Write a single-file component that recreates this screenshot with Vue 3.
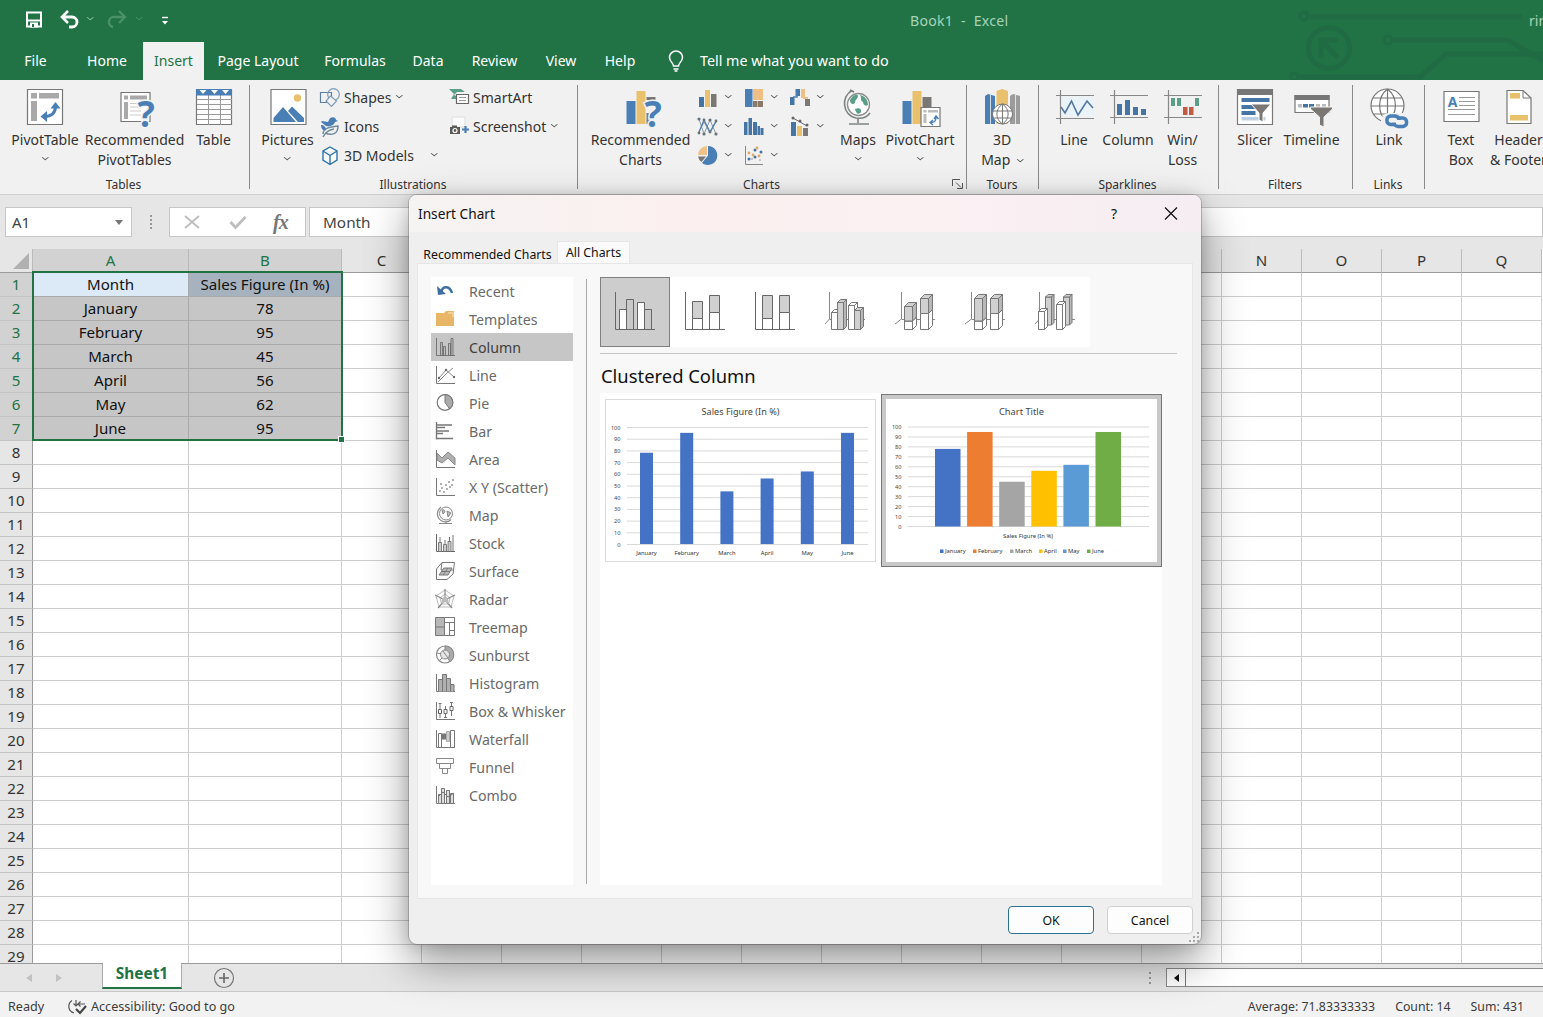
<template>
  <div class="excel">
    <header class="title-bar">
      <svg class="circuit" width="253" height="80" viewBox="1290 0 253 80">
        <g fill="none" stroke="#206b43" stroke-width="5">
          <path d="M1310 17H1522M1394 40H1508L1543 61M1300 77H1420L1446 54H1543" />
          <circle cx="1329" cy="48" r="20.5" />
          <circle cx="1388" cy="40" r="4" stroke-width="3" />
          <circle cx="1304" cy="16" r="4" stroke-width="3" />
          <circle cx="1294" cy="77" r="4" stroke-width="3" />
          <path d="M1338 58L1323 42M1321 58V40H1338" />
        </g>
      </svg>
      <div class="quick-access">
        <Glyph :shapes="icons.save" :width="18" :height="18" class="qa-save" />
        <Glyph :shapes="icons.undo" :width="20" :height="18" class="qa-undo" />
        <i class="chev pale"></i>
        <Glyph :shapes="icons.redo" :width="20" :height="18" class="qa-redo" />
        <i class="chev dim"></i>
        <Glyph :shapes="icons.customize" :width="8" :height="10" class="qa-custom" />
      </div>
      <div class="doc-title">Book1&nbsp; -&nbsp; Excel</div>
      <div class="user-name">rin</div>
    </header>

    <nav class="menu">
      <span v-for="m in menus" :key="m" class="menu-item" :class="['m-' + m.split(' ')[0].toLowerCase(), { active: m === 'Insert' }]">{{ m }}</span>
      <Glyph :shapes="icons.bulb" :width="16" :height="22" class="bulb" />
      <span class="tell-me">Tell me what you want to do</span>
    </nav>

    <section class="ribbon">
      <div v-for="g in groups" :key="g.name" class="group" :class="'g-' + g.name.toLowerCase()">
        <div class="group-body">
          <template v-for="(b, i) in g.items" :key="i">
            <div v-if="b.rows" class="small-list" :class="b.cls">
              <div v-for="r in b.rows" :key="r.label" class="small-btn">
                <Glyph :shapes="icons[r.icon]" :width="20" :height="20" />
                <span>{{ r.label }}</span>
                <i v-if="r.drop" class="chev"></i>
              </div>
            </div>
            <div v-else-if="b.minis" class="mini-grid">
              <div v-for="m in b.minis" :key="m" class="mini">
                <Glyph :shapes="icons[m]" :width="20" :height="20" />
                <i class="chev"></i>
              </div>
            </div>
            <div v-else class="big-btn" :class="b.cls">
              <Glyph :shapes="icons[b.icon]" :width="40" :height="40" />
              <span>{{ b.label }}</span>
              <span v-if="b.label2">{{ b.label2 }}<i v-if="b.inlineDrop" class="chev"></i></span>
              <i v-if="b.drop" class="chev below"></i>
            </div>
          </template>
        </div>
        <div class="group-name">{{ g.title }}</div>
        <Glyph v-if="g.launcher" :shapes="icons.launcher" :width="11" :height="11" class="launcher" />
      </div>
    </section>

    <section class="formula-bar">
      <div class="name-box">A1<i class="tri-down"></i></div>
      <div class="dots"><b></b><b></b><b></b><b></b></div>
      <div class="fx-box">
        <Glyph :shapes="icons.cancel" :width="18" :height="16" />
        <Glyph :shapes="icons.enter" :width="20" :height="16" />
        <em>fx</em>
      </div>
      <div class="formula">Month</div>
    </section>

    <main class="sheet">
      <div class="row head">
        <div class="corner"><i></i></div>
        <div v-for="(c, i) in columns" :key="c" class="col-head" :class="{ sel: i < 2 }">{{ c }}</div>
      </div>
      <div v-for="r in 29" :key="r" class="row">
        <div class="row-head" :class="{ sel: r <= 7 }">{{ r }}</div>
        <div v-for="(c, i) in columns" :key="c" class="cell" :class="cellClass(r, i)">{{ cellText(r, i) }}</div>
      </div>
      <div class="selection"><i></i></div>
    </main>

    <section class="sheet-tabs">
      <i class="arrow left"></i>
      <i class="arrow right"></i>
      <div class="sheet-tab">Sheet1</div>
      <Glyph :shapes="icons.addSheet" :width="22" :height="22" class="add-sheet" />
      <div class="dots grip"><b></b><b></b><b></b></div>
      <div class="scroll"><div class="scroll-btn"><i></i></div></div>
    </section>

    <footer class="status">
      <span class="ready">Ready</span>
      <Glyph :shapes="icons.access" :width="20" :height="18" />
      <span class="access-text">Accessibility: Good to go</span>
      <span class="stat avg">Average: 71.83333333</span>
      <span class="stat cnt">Count: 14</span>
      <span class="stat sum">Sum: 431</span>
    </footer>

    <div class="dialog">
      <div class="dialog-title">
        <span>Insert Chart</span>
        <span class="help">?</span>
        <Glyph :shapes="icons.close" :width="14" :height="14" />
      </div>
      <div class="dialog-tabs">
        <div class="tab">Recommended Charts</div>
        <div class="tab current">All Charts</div>
      </div>
      <div class="dialog-panel">
        <ul class="type-list">
          <li v-for="t in chartTypes" :key="t" :class="{ picked: t === 'Column' }">
            <Glyph :shapes="typeIcons[t]" :width="20" :height="20" />
            <span>{{ t }}</span>
          </li>
        </ul>
        <div class="divider"></div>
        <div class="chart-side">
          <div class="subtypes">
            <div v-for="(s, i) in subtypes" :key="i" class="subtype" :class="{ picked: i === 0 }">
              <Glyph :shapes="s" :width="41" :height="40" />
            </div>
          </div>
          <div class="rule"></div>
          <h2>Clustered Column</h2>
          <div class="previews">
            <svg class="preview plain" width="271" height="163">
              <text class="chart-title" x="135.5" y="16" textLength="78" lengthAdjust="spacingAndGlyphs">Sales Figure (In %)</text>
              <g v-for="n in 11" :key="n">
                <line x1="22" x2="263" :y1="gridA(n)" :y2="gridA(n)" class="grid-line" />
                <text class="axis" x="15.5" :y="gridA(n) + 2">{{ (n - 1) * 10 }}</text>
              </g>
              <g v-for="(d, i) in sales" :key="d.month">
                <rect :x="35 + i * 40.2" :y="145 - d.value * 1.17" width="13" :height="d.value * 1.17" fill="#4472c4" />
                <text class="cat" :x="41.5 + i * 40.2" y="156">{{ d.month }}</text>
              </g>
            </svg>
            <div class="preview framed">
              <svg width="271" height="163">
                <text class="chart-title" x="135.5" y="16" textLength="45" lengthAdjust="spacingAndGlyphs">Chart Title</text>
                <g v-for="n in 11" :key="n">
                  <line x1="22" x2="263" :y1="gridB(n)" :y2="gridB(n)" class="grid-line" />
                  <text class="axis" x="15.5" :y="gridB(n) + 2">{{ (n - 1) * 10 }}</text>
                </g>
                <g v-for="(d, i) in sales" :key="d.month">
                  <rect :x="49 + i * 32.1" :y="127.5 - d.value * 0.995" width="25.5" :height="d.value * 0.995" :fill="d.color" />
                  <rect :x="d.legend" y="150.5" width="3.5" height="3.5" :fill="d.color" />
                  <text class="cat start" :x="d.legend + 5" y="154">{{ d.month }}</text>
                </g>
                <text class="cat" x="142" y="139" textLength="50" lengthAdjust="spacingAndGlyphs">Sales Figure (In %)</text>
              </svg>
            </div>
          </div>
        </div>
      </div>
      <div class="dialog-footer">
        <button class="ok">OK</button>
        <button>Cancel</button>
      </div>
      <Glyph :shapes="icons.resize" :width="12" :height="12" class="resize" />
    </div>
  </div>
</template>

<script setup>
import { h } from 'vue'

// 形状: [路径, 填充, 描边, 线宽],或 { t, x, y, size, fill } 表示文字
const Glyph = (props) =>
  h(
    'svg',
    { width: props.width, height: props.height, viewBox: `0 0 ${props.width} ${props.height}`, style: { overflow: 'visible' } },
    props.shapes.map((s) =>
      Array.isArray(s)
        ? h('path', { d: s[0], fill: s[1] || 'none', stroke: s[2] || 'none', 'stroke-width': s[3] || 1 })
        : h('text', {
            x: s.x, y: s.y, fill: s.fill, 'font-size': s.size, 'font-weight': 700, 'text-anchor': 'middle',
            stroke: s.halo || 'none', 'stroke-width': s.halo ? 3 : 0, 'paint-order': 'stroke'
          }, s.t)
    )
  )
Glyph.props = ['shapes', 'width', 'height']

const BLUE = '#4a7fb5'
const GOLD = '#e9c06c'
const GRAY = '#7b7774'
const TEAL = '#5c9f88'
const DARK = '#6a6a6a'

const box = (x, y, w, hh) => `M${x} ${y}h${w}v${hh}h${-w}z`
const disc = (x, y, r) => `M${x - r} ${y}a${r} ${r} 0 1 0 ${2 * r} 0a${r} ${r} 0 1 0 ${-2 * r} 0z`
const dots = (r, ...pts) => pts.map(([x, y]) => disc(x, y, r)).join('')

const icons = {
  save: [[box(2, 1.5, 14, 14), 'none', '#fff', 2], [box(3, 8.5, 12, 2), '#fff'], [box(5, 11.5, 8, 5), '#fff'], [box(7, 13, 2, 3), '#217346']],
  undo: [['M3 6H12A5 5 0 0 1 12 16H9', 'none', '#fff', 2.8], ['M8 0L2 6L8 12', 'none', '#fff', 2.6]],
  redo: [['M17 6H8A5 5 0 0 0 6 16', 'none', '#4a9069', 2.4], ['M12 0L18 6L12 12', 'none', '#4a9069', 2.4]],
  customize: [['M1 1.5H7', 'none', '#fff', 1.4], ['M1 5H7L4 8.5z', '#fff']],
  bulb: [['M5.5 16C5.5 13 1.5 11.5 1.5 7.5A6.5 6.5 0 0 1 14.5 7.5C14.5 11.5 10.5 13 10.5 16zM5.5 19H10.5M6.5 21H9.5', 'none', '#fff', 1.5]],
  launcher: [['M.5 7V.5H8M10.500 4V9.500H5M4 3.500L9 8.500', 'none', '#555']],
  cancel: [['M2 2L16 14M16 2L2 14', 'none', '#bdbdbd', 1.8]],
  enter: [['M2.500 8L7.500 13.500L17.500 3', 'none', '#bdbdbd', 2.8]],
  addSheet: [[disc(11, 11, 9.5), 'none', '#777', 1.2], ['M11 6V16M6 11H16', 'none', '#666', 1.6]],
  access: [['M4 3.500C-1 7 0 14 6 16M8 3V9M5.500 6.500L8 9L10.500 6.500M10 7H17M12.500 4.500L10 7L12.500 9.500', 'none', '#555', 1.2], ['M8 12L12 16L18 9', 'none', '#444', 2.2]],
  close: [['M1 .5L13 12.5M13 .5L1 12.5', 'none', '#111', 1.2]],
  resize: [[box(8, 0, 2, 2) + box(4, 4, 2, 2) + box(8, 4, 2, 2) + box(0, 8, 2, 2) + box(4, 8, 2, 2) + box(8, 8, 2, 2), '#aaa']],

  pivot: [
    [box(2.5, 2.5, 35, 35), '#fff', '#777', 1.2],
    [box(6, 6, 6, 5.5) + box(14, 6, 20, 5.5) + box(6, 14, 6, 20), '#a9a9a9'],
    ['M19 29.5C27 29.5 30.5 26 30.5 19', 'none', BLUE, 3],
    ['M25.5 21.5L30.5 15L35.5 21.5zM22 24L15.5 29.5L22 35z', BLUE]
  ],
  recPivot: [
    [box(6, 5.5, 29, 29), '#fff', '#777', 1.2],
    [box(9, 8.5, 4, 4) + box(15, 8.5, 17, 4) + box(9, 15, 4, 17), '#a9a9a9'],
    ['M15 16.5H24M15 20H24M15 24H26M15 28H26', 'none', '#ccc'],
    { t: '?', x: 31, y: 40, size: 36, fill: BLUE, halo: '#f1f1f1' }
  ],
  table: [
    [box(2.5, 2.5, 35, 35), '#fff', '#777', 1.2],
    ['M14.5 8V38M26.5 8V38M3 12.500H38M3 17.500H38M3 22.500H38M3 27.500H38M3 32.500H38', 'none', '#999'],
    [box(2, 2, 36, 6.5), BLUE],
    ['M5.5 3H12.5L9 7zM17 3H24L20.5 7zM28 3H35L31.5 7z', '#fff']
  ],
  pictures: [
    [box(3, 2.5, 35, 35), '#fff', '#777', 1.2],
    [disc(29.5, 11, 3.7), GOLD],
    ['M5.5 35V31L15 20L28 35zM20 24L24 19.5L36 31V35H30z', BLUE]
  ],
  shapes: [[box(.5, 4.5, 11, 10), '#f1f1f1', '#5f7f9f', 1.2], [disc(13.5, 6.5, 5.8), 'none', '#7f9bb8', 1.2], ['M10.5 8L16.5 13L11.5 18.5L6 13z', '#f1f1f1', '#7f9bb8', 1.2]],
  iconsIcon: [
    ['M10 1C14-1 16 1 16 3L18 4L15 5C14 9 8 10 6 9L1 5L2 4L8 5z', BLUE],
    ['M3 17C3 11 10 10 18 9C18 17 12 19 5 16M3 20C6 14 10 13 14 12', 'none', '#708c9c', 1.5],
    ['M1 8C4 8 6 10 6 13C3 14 1 12 1 8z', BLUE]
  ],
  models: [['M10 1L17 5V14L10 18.5L3 14V5zM3 5L10 9.5L17 5M10 9.5V18', '#f8fbff', '#2f74a8', 1.4]],
  smartArt: [['M0 1H12L16 4H8L5 7L9 9V11H2L5 6z', TEAL], [box(7.5, 6.5, 12, 9), '#fff', '#666', 1.2], ['M10 9.5H17M10 12.5H17', 'none', '#999']],
  screenshot: [[box(3, 0, 13, 10), '#fbfbfb', '#ddd'], [box(1, 10, 10, 7) + box(3, 8.5, 5, 2), '#5d5b58'], [disc(6, 13.5, 2), 'none', '#fff', 1.2], ['M16.5 9V16M13 12.5H20', 'none', BLUE, 2.2]],

  recCharts: [
    [box(5.5, 14, 9, 23), BLUE], [box(15.5, 4, 9, 33), GOLD], [box(25.5, 10, 9, 3), GRAY], [box(25.5, 26, 5, 11), GRAY],
    { t: '?', x: 32, y: 40, size: 36, fill: BLUE, halo: '#f1f1f1' }
  ],
  miniColumn: [[box(1, 9, 5, 10), '#4475a5'], [box(7, 2, 5, 17), GOLD], [box(13, 6, 5.5, 13), GRAY]],
  miniTree: [[box(1, 1, 7.5, 18), BLUE], [box(9, 1, 10, 11), '#efbf85'], [box(9, 13, 4, 6) + box(13.5, 13, 5.5, 6), '#8b7a68']],
  miniWater: [['M0 9H4.5V17H0zM5.500 1H10V8H5.500z', '#4475a5'], ['M3 9H7V1', 'none', BLUE, 1.5], [box(11, 1, 4, 9), '#efbf85'], [box(15, 11, 5, 7), GRAY], ['M13 10H18', 'none', '#efbf85', 2]],
  miniLine: [
    ['M1 2L6 17L12 3L18 17M1 15L6 5L12 16L18 5', 'none', '#8c98a3'],
    ['M1 15L6 3L12 15L18 4', 'none', BLUE, 1.2],
    [dots(1.6, [1, 2], [6, 17], [12, 3], [18, 17]), '#66727c'],
    [dots(1.4, [1, 16], [6, 3], [12, 15], [18, 4]), '#66727c']
  ],
  miniHist: [[box(0, 5, 3.5, 13) + box(4.5, 1, 3.5, 17) + box(9, 5, 4, 13) + box(13.5, 9, 2.5, 9) + box(16.5, 11, 3, 7), '#4475a5']],
  miniCombo: [[box(1, 5, 5, 14), '#4475a5'], [box(7, 9, 5, 10), GOLD], [box(13, 11, 5, 8), GRAY], ['M3 1L10 5L17 9', 'none', '#666'], [dots(1.5, [3, 1], [10, 4], [17, 8]), '#666']],
  miniPie: [['M10 9.5L10 0A9.5 9.500 0 1 1 4 17z', BLUE], ['M9 9V0A9 9 0 0 0 0 9z', '#efc28a'], ['M8 10.5H0A9 9 0 0 0 3.5 16z', GRAY]],
  miniScatter: [['M1.5 0V18.5H19', 'none', '#888'], [dots(1.5, [5, 13], [11, 11], [17, 6], [11, 4]), '#4475a5'], [dots(1.4, [5, 7], [9, 9], [15, 10], [13, 2]), '#e0a860'], [dots(1.1, [16, 14], [8, 13]), '#bbb']],

  maps: [
    [disc(20.5, 17.5, 11), '#fff', '#8a8f8d', 1.3],
    ['M12 13C15 7 20 7 20 9C20 12 17 12 17 16C15 18 12 17 12 13zM22 8C27 9 30 13 30 18C27 20 25 17 25 15C22 14 24 11 22 8zM17 22C21 20 24 22 23 25C21 28 18 27 17 22z', TEAL],
    ['M14 3.5C3 9 4 28 18 31C24 32 29 30 32 26M20 31V36M11 37H31', 'none', '#7d8582', 1.6], ['M12 3L16 5', 'none', '#777', 1.6]
  ],
  pivotChart: [
    [box(2.5, 14, 9, 23), BLUE], [box(12.5, 4, 9, 33), GOLD], [box(22.5, 10, 9, 10), GRAY],
    [box(21, 20.5, 19, 19), '#fff', '#777', 1.2],
    [box(23.5, 23, 3, 2.5) + box(28, 23, 10, 2.5) + box(23.5, 27, 3, 9), '#bbb'],
    ['M31 35.5C35 35.5 36 34 36 30M34 32L36 29L38.5 32M33 33L30 35.5L33 38', 'none', BLUE, 1.4]
  ],
  map3d: [
    ['M3 9L6 7L13 9V37H3z', BLUE], ['M14.5 4L20 2L26 4V37H14.5z', GOLD], ['M28 9L31 7L38 9V37H28z', '#9c9c9c'],
    ['M8.500 8V37', 'none', '#f1f1f1', .8], ['M33.500 8V37', 'none', '#f1f1f1', .8],
    [disc(20.5, 27, 10), '#fff', '#777'],
    ['M20.5 17V37M11 24H30M11 31H30M20.5 17C13 22 13 32 20.5 37M20.5 17C28 22 28 32 20.5 37', 'none', '#777']
  ],
  sparkLine: [['M2 8.5H40M2 31.5H40M6.5 3V37', 'none', '#888', 1.2], [box(7.5, 10, 32, 19), '#eaf2fa'], ['M7 20L11 26L17.5 14L24 28L33 14L39 21', 'none', '#54799f', 1.6]],
  sparkCol: [['M2 8.5H40M2 30.5H40M6.5 3V37', 'none', '#888', 1.2], [box(9, 17, 5, 11) + box(17, 13, 5, 15) + box(25, 20, 5, 8) + box(33, 22, 5, 6), '#4475a5']],
  sparkWin: [['M1 8.5H39M1 30.5H39M5.5 3V37', 'none', '#888', 1.2], [box(8, 11, 4, 8) + box(14, 11, 4, 8) + box(32, 11, 4, 8), TEAL], [box(20, 20, 4.5, 8) + box(26, 20, 4.5, 8), '#c25b43']],
  slicer: [
    [box(2.5, 2.5, 35, 35), '#fff', '#777', 1.2], [box(2, 2, 36, 6), '#777'],
    [box(6.5, 11, 28, 4) + box(6.5, 18, 14, 4) + box(6.5, 24, 14, 4), '#4475a5'], [box(6.5, 30, 24, 3.5), '#bdd0e4'],
    ['M16 17H36L28 26V35L24 33V26z', GRAY, '#fff']
  ],
  timeline: [
    [box(3, 8.5, 34, 17), '#fff', '#777', 1.2], [box(2.5, 8, 35, 5), '#777'],
    [box(6, 17, 4, 3.5) + box(24, 17, 4, 3.5) + box(30, 17, 4, 3.5), '#bbb'], [box(11, 17, 5, 3.5) + box(17, 17, 5, 3.5), '#4475a5'],
    ['M18.5 20H40.5V22L32 30V40L27.5 38V30L18.5 22z', GRAY, '#f1f1f1']
  ],
  link: [
    [disc(18.5, 18.5, 16.5), '#fff', '#777', 1.2],
    ['M18.5 2V35M4 11H33M2 19H35M4 27H33M18.5 2C8 10 8 27 18.5 35M18.5 2C29 10 29 27 18.5 35', 'none', '#777', 1.2],
    ['M20 26H36V42H20A8 8 0 0 1 20 26z', '#f1f1f1'],
    ['M27 37.5H21.5A4.3 4.3 0 0 1 21.5 29H26A4.3 4.3 0 0 1 30 33M28 31H34A4.3 4.3 0 0 1 34 39.5H29A4.3 4.3 0 0 1 25 35.5', 'none', BLUE, 3.4]
  ],
  textBox: [
    [box(3, 4.5, 35, 30), '#fff', '#777', 1.2],
    ['M18 10.5H34M18 14.5H34M18 18.5H34M7 22.5H34M7 27.5H34', 'none', '#999'],
    { t: 'A', x: 11.5, y: 20, size: 14, fill: BLUE }
  ],
  header: [['M8 3.5H24L32 11V36.5H8z', '#fff', '#777', 1.2], ['M24 3.5V11H32', 'none', '#777'], [box(11, 6, 10, 5.5) + box(11, 28, 18, 5.5), GOLD]]
}

const axis = ['M1.5 1V18.5H20', 'none', '#777']
const typeIcons = {
  Recent: [['M6 11C8 4 15 5 17 12', 'none', '#3f6f9f', 2.4], ['M2 5L3 14L11 13z', '#3f6f9f']],
  Templates: [['M1 4H9L11 2H19V17H1z', '#e9b566'], ['M13 4H18V8', 'none', '#f5d69e', 1.5]],
  Column: [axis, [box(5.5, 5.5, 2, 13) + box(8.5, 9.5, 2, 9) + box(13.5, 6.5, 2, 12) + box(16, 1.5, 2, 17), '#bbb', '#666', .8]],
  Line: [axis, ['M4 13L11 5L19 12M3 17L12 8L18 3', 'none', '#888'], [dots(1.2, [4, 13], [11, 5], [19, 12]), DARK]],
  Pie: [[disc(10, 9.5, 7.8), '#fff', '#777', 1.2], ['M10 9.5V1.7A7.8 7.8 0 0 1 14.5 15.8z', '#aaa', '#777']],
  Bar: [['M1.5 1V18.5', 'none', '#777', 1.4], ['M2 4H17M2 6.5H10M2 10H14M2 12.5H8M2 17.5H18', 'none', '#777', 1.5]],
  Area: [['M2 11V4L7 9L13 3L20 9V16L13 9L7 14z', '#b0b0b0', '#888'], axis],
  'X Y (Scatter)': [axis, [dots(1, [5, 14], [7, 11], [9, 15], [12, 12], [11, 8], [15, 10], [14, 5], [17, 8], [18, 3], [6, 7]), '#999']],
  Map: [[disc(11, 8.5, 6.5), '#fff', '#888'], ['M7 5C10 4 11 7 8 9zM12 6L16 8L13 12z', '#bbb', '#888'], ['M6 2C1 6 1 14 8 16.5C11 17.5 14 16.5 16 14.5M11 16.5V18.500M4 18.5H17', 'none', '#888', 1.2]],
  Stock: [['M1.5 1V18.5H20', 'none', '#666'], ['M5 4V18M10 7V18M14.5 4V18M18 2V18', 'none', '#777'], [box(3.5, 9.5, 3, 9) + box(8.5, 11.5, 3, 7) + box(13, 8.5, 3, 10), '#ccc', '#666', .8]],
  Surface: [['M1.5 8L7 1.5H19.5L18 13L12 18.5H1.5zM7 1.5L6 9H18', '#fff', '#777'], ['M4 14L9 7H17L13 14zM6.5 10.5H15M8 14L13 7', '#bbb', '#777']],
  Radar: [['M10 1L19 7L16 18H4L1 7zM10 5L15 9L13.5 15H6.5L5 9z', 'none', '#bbb'], ['M10 0V11M10 11L20 6M10 11L3 19M10 11L17 19M10 11L0 6', 'none', '#888', 1.2], ['M10 6L13 10L14 15L10 13L6 15L7 10z', '#bbb']],
  Treemap: [[box(.5, .5, 9, 18), '#b8b8b8', '#777'], [box(9.5, .5, 10, 18), '#fff', '#777'], ['M.5 10H9.5M9.5 5.5H19.5M14.500 5.5V18.5M14.5 13.5H19.5', 'none', '#777']],
  Sunburst: [[disc(10, 9.5, 8.5), '#fff', '#888', 1.2], ['M10 1A8.5 8.5 0 0 1 15 16.5L12.5 13A4 4 0 0 0 10 6z', '#aaa', '#888'], [disc(10, 9.5, 4.5), '#e4e4e4', '#888'], ['M2 8L6 9M4 16L7 13M8 6L13 13', 'none', '#888']],
  Histogram: [axis, ['M3.5 18.500V6.5H7.5V18.5M7.5 18.5V1.5H11.5V18.5M11.5 18.500V5.5H15.5V18.5M15.5 18.5V11.5H19V18.5', '#b0b0b0', '#777']],
  'Box & Whisker': [axis, ['M5 3V17M10.5 5V16M16.500 1V15M3.5 2.500H6.5M9 16.500H12M15 1.5H18', 'none', '#777'], [box(3.5, 8.5, 3, 4) + box(9, 8.5, 3, 4) + box(15, 5.5, 3, 4), '#fff', '#666']],
  Waterfall: [axis, [box(3.5, 4.500, 3, 14), '#fff', '#777'], [box(7, 4.5, 4, 6), '#777'], [box(11.500, 2.5, 3, 10), '#ccc', '#aaa'], [box(15.5, 1.5, 4, 17), '#fff', '#777']],
  Funnel: [[box(1.5, 1.5, 17, 5) + box(4.5, 6.5, 11, 5) + box(7.5, 11.5, 5, 5), '#fff', '#888']],
  Combo: [axis, [box(3.5, 9.5, 3, 9) + box(6.5, 3.5, 3, 15) + box(11.5, 5.5, 3, 13) + box(15.5, 8.5, 3, 10), '#ddd', '#777'], ['M3 12L8 7L13 12L19 8', 'none', '#777']]
}
const chartTypes = Object.keys(typeIcons)

// 立体柱: 正面 + 顶面 + 侧面
const bar3d = (x, y, w, hh, d, fill) => [
  [box(x, y, w, hh), fill, '#777'],
  [`M${x} ${y}l${d} ${-d}h${w}l${-d} ${d}z`, fill, '#777'],
  [`M${x + w} ${y}l${d} ${-d}v${hh}l${-d} ${d}z`, fill === '#fff' ? '#fff' : '#b8b8b8', '#777']
]
const base = ['M.5 0V37.5H40', 'none', '#666']
const bars = (fill, ...list) => [list.map((b) => box(...b)).join(''), fill, '#666']
const base3d = (x) => [`M${x} 0V27L0 32M${x} 27.5H40`, 'none', '#888']
const subtypes = [
  [bars('#fff', [4.5, 17.5, 7, 20], [22.5, 10.5, 7, 27]), bars('#c9c9c9', [11.5, 7.5, 7, 30], [29.5, 17.5, 7, 20]), base],
  [bars('#d0d0d0', [7.5, 9.5, 10, 17], [24.5, 3.5, 10, 17]), bars('#fff', [7.5, 26.5, 10, 11], [24.5, 20.5, 10, 17]), base],
  [bars('#d0d0d0', [7.5, 3.5, 10, 23], [24.5, 3.5, 10, 17]), bars('#fff', [7.5, 26.5, 10, 11], [24.5, 20.5, 10, 17]), base],
  [base3d(4.5), ...bar3d(6.5, 20.5, 6, 17, 3, '#fff'), ...bar3d(12.5, 10.5, 6, 27, 3, '#d0d0d0'), ...bar3d(23.5, 13.5, 6, 24, 3, '#fff'), ...bar3d(29.5, 18.5, 6, 19, 3, '#d0d0d0')],
  [base3d(6.5), ...bar3d(9.5, 29, 8, 8.5, 4, '#fff'), ...bar3d(9.5, 14.5, 8, 14.5, 4, '#d0d0d0'), ...bar3d(25.5, 21.5, 8, 16, 4, '#fff'), ...bar3d(25.5, 6.5, 8, 15, 4, '#d0d0d0')],
  [base3d(6.5), ...bar3d(9.5, 29, 8, 8.5, 4, '#fff'), ...bar3d(9.5, 6.5, 8, 22.5, 4, '#d0d0d0'), ...bar3d(25.5, 21.5, 8, 16, 4, '#fff'), ...bar3d(25.5, 6.5, 8, 15, 4, '#d0d0d0')],
  [base3d(4.5), ...bar3d(10.5, 5, 6, 28, 2.5, '#d0d0d0'), ...bar3d(3.5, 19.5, 6, 18, 3, '#fff'), ...bar3d(28.5, 5, 6, 28, 2.5, '#d0d0d0'), ...bar3d(21.5, 12.5, 6, 25, 3, '#fff')]
]

const menus = ['File', 'Home', 'Insert', 'Page Layout', 'Formulas', 'Data', 'Review', 'View', 'Help']

const groups = [
  {
    name: 'Tables', title: 'Tables', items: [
      { label: 'PivotTable', icon: 'pivot', drop: true, cls: 'w78' },
      { label: 'Recommended', label2: 'PivotTables', icon: 'recPivot', cls: 'w101' },
      { label: 'Table', icon: 'table', cls: 'w57' }
    ]
  },
  {
    name: 'Illus', title: 'Illustrations', items: [
      { label: 'Pictures', icon: 'pictures', drop: true, cls: 'w59' },
      { cls: 'first', rows: [{ label: 'Shapes', icon: 'shapes', drop: true }, { label: 'Icons', icon: 'iconsIcon' }, { label: '3D Models', icon: 'models', drop: true }] },
      { cls: 'second', rows: [{ label: 'SmartArt', icon: 'smartArt' }, { label: 'Screenshot', icon: 'screenshot', drop: true }] }
    ]
  },
  {
    name: 'Charts', title: 'Charts', launcher: true, items: [
      { label: 'Recommended', label2: 'Charts', icon: 'recCharts', cls: 'w101' },
      { minis: ['miniColumn', 'miniTree', 'miniWater', 'miniLine', 'miniHist', 'miniCombo', 'miniPie', 'miniScatter'] },
      { label: 'Maps', icon: 'maps', drop: true, cls: 'w52' },
      { label: 'PivotChart', icon: 'pivotChart', drop: true, cls: 'w72' }
    ]
  },
  { name: 'Tours', title: 'Tours', items: [{ label: '3D', label2: 'Map', inlineDrop: true, icon: 'map3d', cls: 'w70' }] },
  {
    name: 'Spark', title: 'Sparklines', items: [
      { label: 'Line', icon: 'sparkLine', cls: 'w54' },
      { label: 'Column', icon: 'sparkCol', cls: 'w54' },
      { label: 'Win/', label2: 'Loss', icon: 'sparkWin', cls: 'w55' }
    ]
  },
  { name: 'Filters', title: 'Filters', items: [{ label: 'Slicer', icon: 'slicer', cls: 'w52' }, { label: 'Timeline', icon: 'timeline', cls: 'w61' }] },
  { name: 'Links', title: 'Links', items: [{ label: 'Link', icon: 'link', cls: 'w72' }] },
  { name: 'Text', title: '', items: [{ label: 'Text', label2: 'Box', icon: 'textBox', cls: 'w52' }, { label: 'Header', label2: '& Footer', icon: 'header', cls: 'w63' }] }
]

const columns = 'ABCDEFGHIJKLMNOPQR'.split('')

const sales = [
  { month: 'January', value: 78, color: '#4472c4', legend: 54 },
  { month: 'February', value: 95, color: '#ed7d31', legend: 87 },
  { month: 'March', value: 45, color: '#a5a5a5', legend: 124 },
  { month: 'April', value: 56, color: '#ffc000', legend: 153 },
  { month: 'May', value: 62, color: '#5b9bd5', legend: 177 },
  { month: 'June', value: 95, color: '#70ad47', legend: 201 }
]

const gridA = (n) => 145.5 - (n - 1) * 11.7
const gridB = (n) => 127.5 - (n - 1) * 9.95

const cellText = (r, i) => {
  if (r > 7 || i > 1) return ''
  if (r === 1) return i ? 'Sales Figure (In %)' : 'Month'
  return i ? sales[r - 2].value : sales[r - 2].month
}

const cellClass = (r, i) => {
  if (r > 7 || i > 1) return ''
  if (r === 1) return i ? 'picked title-b' : 'picked title-a'
  return 'picked'
}
</script>

<style>
body {
  margin: 0;
  overflow: hidden;
}
</style>

<style scoped>
.excel {
  position: relative;
  width: 1543px;
  height: 1017px;
  overflow: hidden;
  background: #e6e6e6;
  font-family: "Noto Sans", "Open Sans", "Liberation Sans", sans-serif;
  font-size: 14px;
  color: #333;
  white-space: nowrap;
}

svg {
  display: block;
  flex: none;
}

.chev {
  display: inline-block;
  width: 3.5px;
  height: 3.5px;
  flex: none;
  border-right: 1.3px solid #555;
  border-bottom: 1.3px solid #555;
  transform: translateY(-2px) scaleY(0.8) rotate(45deg);
}

.chev.pale {
  border-color: #8fbfa4;
}

.chev.dim {
  border-color: #4a9069;
}

/* 标题栏 */
.title-bar {
  position: relative;
  height: 42px;
  background: #217346;
  display: flex;
  align-items: center;
}

.circuit {
  position: absolute;
  right: 0;
  top: 0;
  z-index: 1;
}

.quick-access {
  display: flex;
  align-items: center;
  width: 910px;
  flex: none;
  padding-left: 25px;
  box-sizing: border-box;
  margin-top: -3px;
}

.qa-undo {
  margin-left: 17px;
}

.quick-access .pale {
  margin-left: 8px;
}

.qa-redo {
  margin-left: 14px;
}

.quick-access .dim {
  margin-left: 10px;
}

.qa-custom {
  margin-left: 20px;
  margin-top: 3px;
}

.doc-title {
  color: #a7d3b9;
  width: 619px;
  flex: none;
  margin-top: -2px;
  font-size: 14.1px;
  letter-spacing: 0.27px;
}

.user-name {
  color: #a7d3b9;
  position: relative;
  z-index: 2;
  margin-top: -2px;
}

.menu {
  height: 38px;
  background: #217346;
  display: flex;
  align-items: center;
  color: #fff;
}

.menu-item {
  height: 38px;
  line-height: 37px;
  text-align: center;
}

.m-file {
  width: 71px;
}

.m-home {
  width: 72px;
}

.m-insert {
  width: 61px;
}

.m-page {
  width: 108px;
}

.m-formulas {
  width: 86px;
}

.m-data {
  width: 60px;
}

.m-review {
  width: 73px;
}

.m-view {
  width: 60px;
}

.m-help {
  width: 58px;
}

.menu-item.active {
  background: #f1f1f1;
  color: #217346;
}

.bulb {
  margin-left: 19px;
}

.tell-me {
  margin: -2px 0 0 16px;
  font-size: 14.3px;
}

/* 功能区 */
.ribbon {
  height: 114px;
  background: #f1f1f1;
  border-bottom: 1px solid #cfcfcf;
  display: flex;
  overflow: hidden;
}

.group {
  position: relative;
  flex: none;
  box-sizing: border-box;
  display: flex;
  flex-direction: column;
}

.group::after {
  content: "";
  position: absolute;
  right: 0;
  top: 5px;
  bottom: 5px;
  width: 1px;
  background: #8a8a8a;
}

.g-tables {
  width: 250px;
  padding-left: 6px;
}

.g-illus {
  width: 328px;
  padding-left: 8px;
}

.g-charts {
  width: 389px;
  padding-left: 12px;
}

.g-tours {
  width: 72px;
}

.g-spark {
  width: 180px;
  padding-left: 8px;
}

.g-filters {
  width: 134px;
  padding-left: 10px;
}

.g-links {
  width: 72px;
}

.g-text {
  width: 180px;
  padding-left: 10px;
}

.group-body {
  display: flex;
  height: 93px;
  flex: none;
}

.group-name {
  font-size: 12px;
  line-height: 23px;
  text-align: center;
}

.g-tables .group-name {
  padding-right: 9px;
}

.g-illus .group-name {
  padding-right: 10px;
}

.g-charts .group-name {
  padding-right: 34px;
}

.g-tours .group-name,
.g-links .group-name {
  padding-right: 2px;
}

.g-spark .group-name {
  padding-right: 11px;
}

.g-filters .group-name {
  padding-right: 12px;
}

.big-btn {
  flex: none;
  display: flex;
  flex-direction: column;
  align-items: center;
  padding-top: 7px;
}

.big-btn span {
  line-height: 20px;
}

.big-btn svg {
  margin-bottom: 3px;
}

.big-btn .below {
  margin-top: 7px;
}

.big-btn span .chev {
  margin-left: 8px;
  vertical-align: 2px;
}

.w52 {
  width: 52px;
}

.w54 {
  width: 54px;
}

.w55 {
  width: 55px;
}

.w57 {
  width: 57px;
}

.w59 {
  width: 59px;
}

.w61 {
  width: 61px;
}

.w63 {
  width: 63px;
}

.w70 {
  width: 70px;
}

.w72 {
  width: 72px;
}

.w78 {
  width: 78px;
}

.w101 {
  width: 101px;
}

.small-list {
  padding-top: 3px;
}

.small-list.first {
  width: 126px;
  padding-left: 3px;
}

.small-list.second {
  width: 120px;
  padding-left: 3px;
}

.small-btn {
  display: flex;
  align-items: center;
  height: 29px;
}

.small-btn span {
  margin-left: 4px;
}

.small-btn .chev {
  margin-left: 6px;
}

.first .small-btn:last-child .chev {
  margin-left: 18px;
}

.mini-grid {
  display: grid;
  grid-template-columns: repeat(3, 46px);
  grid-auto-rows: 29px;
  padding: 3px 0 0 7px;
  width: 134px;
}

.mini {
  display: flex;
  align-items: center;
}

.mini .chev {
  margin-left: 8px;
}

.launcher {
  position: absolute;
  right: 4px;
  bottom: 4px;
}

/* 编辑栏 */
.formula-bar {
  display: flex;
  align-items: flex-start;
  height: 54px;
  padding: 12px 0 0 5px;
  box-sizing: border-box;
  background: #e6e6e6;
}

.name-box,
.fx-box,
.formula {
  height: 30px;
  box-sizing: border-box;
  background: #fff;
  border: 1px solid #c6c6c6;
  line-height: 28px;
}

.name-box {
  width: 127px;
  padding: 0 8px 0 6px;
  display: flex;
  justify-content: space-between;
  align-items: center;
  font-size: 15px;
  color: #444;
}

.tri-down {
  border: 4px solid transparent;
  border-top: 5px solid #777;
  border-bottom: 0;
}

.dots {
  width: 37px;
  padding-top: 8px;
  display: flex;
  flex-direction: column;
  align-items: center;
  gap: 2px;
}

.dots b {
  width: 2px;
  height: 2px;
  background: #999;
}

.fx-box {
  width: 137px;
  display: flex;
  align-items: center;
  padding-left: 13px;
}

.fx-box svg + svg {
  margin-left: 27px;
}

.fx-box em {
  margin-left: 25px;
  font: italic bold 20px/26px "Liberation Serif", serif;
  letter-spacing: -1px;
  color: #777;
}

.formula {
  margin-left: 3px;
  flex: 1;
  padding-left: 13px;
  font-size: 15.3px;
  color: #444;
}

/* 表格 */
.sheet {
  position: relative;
  height: 714px;
  overflow: hidden;
  background: #fff;
  font-size: 15.1px;
}

.row {
  display: grid;
  grid-template-columns: 33px 156px 153px repeat(15, 80px);
  height: 24px;
  line-height: 22px;
  text-align: center;
}

.corner,
.row-head,
.col-head,
.cell {
  box-sizing: border-box;
  height: 24px;
  border-right: 1px solid #cdcdcd;
  border-bottom: 1px solid #cdcdcd;
}

.corner,
.row-head,
.col-head {
  background: #e6e6e6;
}

.row-head {
  border-right-color: #9b9b9b;
  border-bottom-color: #c3c3c3;
}

.col-head,
.corner {
  border-bottom-color: #9b9b9b;
  border-right-color: #bbb;
}

.corner {
  display: flex;
  justify-content: flex-end;
  align-items: flex-end;
}

.corner i {
  border-left: 16px solid transparent;
  border-bottom: 16px solid #b1b1b1;
  margin: 0 3px 3px 0;
}

.col-head.sel,
.row-head.sel {
  background: #d2d2d2;
  color: #217346;
}

.cell {
  color: #111;
}

.cell.picked {
  background: #c6c6c6;
  border-color: #aaa;
}

.cell.title-a {
  background: #dce9f7;
}

.cell.title-b {
  background: #a7b2bf;
}

.selection {
  position: absolute;
  left: 32px;
  top: 22px;
  width: 307px;
  height: 166px;
  border: 2px solid #217346;
}

.selection i {
  position: absolute;
  right: -4px;
  bottom: -4px;
  width: 5px;
  height: 5px;
  border: 1px solid #fff;
  background: #217346;
}

/* 工作表标签 */
.sheet-tabs {
  height: 29px;
  box-sizing: border-box;
  background: #e6e6e6;
  border-top: 1px solid #9b9b9b;
  border-bottom: 1px solid #c8c8c8;
  display: flex;
  align-items: center;
}

.arrow {
  border: 4px solid transparent;
}

.arrow.left {
  border-right: 6px solid #c2c2c2;
  border-left: 0;
  margin-left: 26px;
}

.arrow.right {
  border-left: 6px solid #c2c2c2;
  border-right: 0;
  margin-left: 24px;
}

.sheet-tab {
  width: 80px;
  height: 26px;
  margin: -3px 0 0 40px;
  border: 1px solid #aaa;
  border-top: 0;
  border-bottom: 2px solid #217346;
  background: #fff;
  box-sizing: border-box;
  text-align: center;
  line-height: 21px;
  font-weight: 700;
  font-size: 15.4px;
  color: #217346;
}

.add-sheet {
  margin-left: 31px;
}

.grip {
  margin-left: 906px;
  width: 18px;
  padding: 0;
  gap: 3px;
}

.scroll {
  margin-left: 7px;
  flex: 1;
  height: 17px;
  border: 1px solid #8a8a8a;
  border-right: 0;
  background: #fff;
}

.scroll-btn {
  width: 18px;
  height: 17px;
  border-right: 1.5px solid #777;
  display: flex;
  align-items: center;
  justify-content: center;
}

.scroll-btn i {
  border: 4px solid transparent;
  border-right: 5px solid #111;
  border-left: 0;
}

.status {
  height: 25px;
  background: #f2f2f2;
  display: flex;
  align-items: center;
  padding: 3px 19px 0 8px;
  box-sizing: border-box;
  font-size: 12.6px;
  color: #3c3c3c;
}

.ready {
  width: 60px;
}

.access-text {
  margin-left: 3px;
}

.stat {
  font-size: 12.3px;
}

.avg {
  margin-left: auto;
}

.cnt,
.sum {
  margin-left: 20px;
}

/* 插入图表对话框 */
.dialog {
  position: absolute;
  left: 409px;
  top: 195px;
  width: 792px;
  height: 749px;
  box-sizing: border-box;
  background: #efefef;
  border-radius: 8px;
  box-shadow: 0 0 0 1px rgba(120, 110, 110, 0.4), 0 18px 44px rgba(0, 0, 0, 0.42), 0 0 14px rgba(0, 0, 0, 0.14);
  color: #111;
}

.dialog-title {
  height: 37px;
  border-radius: 8px 8px 0 0;
  background: linear-gradient(90deg, #f6f3f3, #fbf0ef 35%, #fbf0f3 70%, #f5edf2);
  display: flex;
  align-items: center;
  padding: 0 23px 0 9px;
  font-size: 13.7px;
}

.help {
  margin-left: auto;
  margin-right: 47px;
  font-size: 14px;
}

.dialog-tabs {
  height: 31px;
  display: flex;
  align-items: flex-end;
  padding-left: 9px;
  font-size: 12.3px;
}

.tab {
  width: 139px;
  height: 19px;
  line-height: 21px;
  text-align: center;
}

.tab.current {
  width: 73px;
  height: 22px;
  line-height: 22px;
  background: #fafafa;
  border: 1px solid #e6e6e6;
  border-bottom: 0;
  box-sizing: border-box;
}

.dialog-panel {
  margin: 0 8px;
  height: 636px;
  box-sizing: border-box;
  background: #f8f8f8;
  border: 1px solid #e6e6e6;
  display: flex;
  padding: 13px 0 13px 13px;
}

.type-list {
  list-style: none;
  margin: 0;
  padding: 0;
  width: 142px;
  height: 608px;
  background: #fff;
  color: #6a6a6a;
  font-size: 14.2px;
}

.type-list li {
  height: 28px;
  display: flex;
  align-items: center;
  padding-left: 4px;
}

.type-list li span {
  margin-left: 14px;
}

.type-list .picked {
  background: #c6c6c6;
  color: #404040;
}

.divider {
  width: 1px;
  height: 605px;
  margin: 2px 13px 0;
  background: #a8a8a8;
}

.subtypes {
  width: 490px;
  height: 70px;
  display: flex;
  background: #fff;
}

.subtype {
  width: 70px;
  height: 70px;
  box-sizing: border-box;
  border: 1px solid transparent;
  padding: 14px 0 0 14px;
}

.subtype.picked {
  background: #cdcdcd;
  border-color: #808080;
}

.rule {
  width: 577px;
  height: 1px;
  margin-top: 6px;
  background: #c4c4c4;
}

.chart-side h2 {
  margin: 0 0 0 1px;
  height: 39px;
  line-height: 43px;
  font-size: 18.4px;
  font-weight: 400;
}

.previews {
  width: 562px;
  height: 492px;
  background: #fff;
  display: flex;
  align-items: flex-start;
}

.preview.plain {
  margin: 6px 5px 0 5px;
  box-sizing: border-box;
  outline: 1px solid #dcdcdc;
  outline-offset: -1px;
}

.preview.framed {
  margin-top: 1px;
  box-sizing: border-box;
  width: 281px;
  height: 173px;
  border: 1px solid #777;
  background: #c8c8c8;
  padding: 4px;
}

.framed svg {
  background: #fff;
}

.grid-line {
  stroke: #d9d9d9;
  stroke-width: 1;
}

.chart-title {
  font-size: 9px;
  text-anchor: middle;
  fill: #444;
}

.axis {
  font-size: 5.6px;
  text-anchor: end;
  fill: #444;
}

.cat {
  font-size: 5.8px;
  text-anchor: middle;
  fill: #333;
}

.cat.start {
  text-anchor: start;
}

.dialog-footer {
  display: flex;
  justify-content: flex-end;
  gap: 13px;
  padding: 7px 8px 0 0;
}

.dialog-footer button {
  width: 86px;
  height: 28px;
  box-sizing: border-box;
  padding: 0;
  font-family: inherit;
  font-size: 12.3px;
  color: #111;
  background: #fdfdfd;
  border: 1px solid #d0d0d0;
  border-radius: 4px;
}

.dialog-footer .ok {
  border: 1.5px solid #2b7391;
}

.resize {
  position: absolute;
  right: 0;
  bottom: 0;
}
</style>
